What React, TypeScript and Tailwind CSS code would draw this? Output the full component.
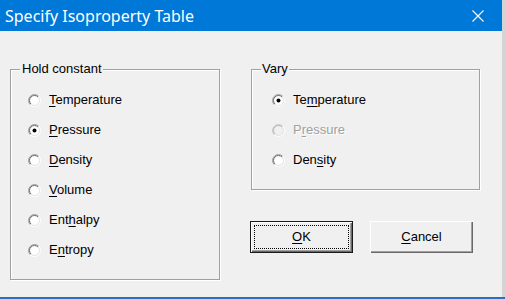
import React from "react";

const FONT = { fontFamily: '"Liberation Sans", Arial, sans-serif' };

function Radio({ checked, disabled }: { checked?: boolean; disabled?: boolean }) {
  return (
    <svg width="13" height="13" viewBox="0 0 13 13" className="shrink-0">
      <circle cx="6.5" cy="6.5" r="5" fill={disabled ? "#f0f0f0" : "#ffffff"} />
      <path d="M2.257 10.743 A6 6 0 0 1 10.743 2.257" stroke={disabled ? "#c8c8c8" : "#a0a0a0"} strokeWidth="1" fill="none" />
      <path d="M10.743 2.257 A6 6 0 0 1 2.257 10.743" stroke="#ffffff" strokeWidth="1" fill="none" />
      <path d="M2.964 10.036 A5 5 0 0 1 10.036 2.964" stroke={disabled ? "#b4b4b4" : "#696969"} strokeWidth="1" fill="none" />
      <path d="M10.036 2.964 A5 5 0 0 1 2.964 10.036" stroke="#e3e3e3" strokeWidth="1" fill="none" />
      {checked && <circle cx="6.5" cy="6.5" r="2" fill="#000" />}
    </svg>
  );
}

function Label({ text, u, disabled }: { text: string; u: number; disabled?: boolean }) {
  return (
    <span
      className={disabled ? "text-[#a0a0a0]" : "text-black"}
      style={disabled ? { textShadow: "1px 1px 0 #ffffff" } : undefined}
    >
      {text.slice(0, u)}
      <span className="underline underline-offset-[2px]">{text[u]}</span>
      {text.slice(u + 1)}
    </span>
  );
}

function Row({ text, u, checked, disabled }: { text: string; u: number; checked?: boolean; disabled?: boolean }) {
  return (
    <div className="flex h-[30px] items-center gap-[8px]">
      <Radio checked={checked} disabled={disabled} />
      <Label text={text} u={u} disabled={disabled} />
    </div>
  );
}

function GroupBox({
  title,
  className,
  labelClass,
  children,
}: {
  title: string;
  className: string;
  labelClass: string;
  children: React.ReactNode;
}) {
  return (
    <div
      className={`relative border border-[#a0a0a0] ${className}`}
      style={{ boxShadow: "inset 1px 1px 0 #ffffff, 1px 1px 0 #ffffff" }}
    >
      <span className={`absolute top-[-9px] bg-[#f0f0f0] leading-[16px] ${labelClass}`}>{title}</span>
      {children}
    </div>
  );
}

export default function App() {
  return (
    <div className="flex h-[299px] w-[505px] flex-col overflow-hidden bg-[#f0f0f0] text-[13px]" style={FONT}>
      <div className="flex flex-1 flex-row">
        <div className="flex w-[502px] flex-col">
          {/* Title bar */}
          <div className="flex h-[31px] items-center justify-between bg-[#0078d7] pl-[5px] pr-[18px]">
            <span
              className="text-[16px] text-white leading-none"
              style={{ fontFamily: '"Noto Sans", "Open Sans", sans-serif' }}
            >
              Specify Isoproperty Table
            </span>
            <svg width="12" height="12" viewBox="0 0 12 12">
              <path d="M0.5 0.5 L11.5 11.5 M11.5 0.5 L0.5 11.5" stroke="#ffffff" strokeWidth="1.1" />
            </svg>
          </div>
          {/* Body */}
          <div className="flex flex-1 flex-row pl-[10px] pt-[38px]">
            <GroupBox title="Hold constant" className="h-[211px] w-[210px] pl-[17px] pt-[15px]" labelClass="left-[9px] pl-[2px] pr-[1px]">
              <Row text="Temperature" u={0} />
              <Row text="Pressure" u={0} checked />
              <Row text="Density" u={0} />
              <Row text="Volume" u={0} />
              <Row text="Enthalpy" u={3} />
              <Row text="Entropy" u={1} />
            </GroupBox>
            <div className="ml-[31px] flex flex-col">
              <GroupBox title="Vary" className="h-[121px] w-[229px] pl-[20px] pt-[15px]" labelClass="left-[9px] pl-[1px] pr-[1px]">
                <Row text="Temperature" u={2} checked />
                <Row text="Pressure" u={1} disabled />
                <Row text="Density" u={3} />
              </GroupBox>
              <div className="ml-[-1px] mt-[31px] flex flex-row gap-[17px]">
                <button className="h-[32px] w-[103px] border border-[#1a1a1a] bg-[#f0f0f0] p-0">
                  <div
                    className="flex h-full w-full p-[3px]"
                    style={{ boxShadow: "inset 1px 1px 0 #ffffff, inset -1px -1px 0 #696969, inset -2px -2px 0 #a0a0a0" }}
                  >
                    <div className="flex flex-1 items-center justify-center border border-dotted border-black">
                      <Label text="OK" u={0} />
                    </div>
                  </div>
                </button>
                <button
                  className="flex h-[32px] w-[103px] items-center justify-center bg-[#f0f0f0]"
                  style={{ boxShadow: "inset 1px 1px 0 #ffffff, inset -1px -1px 0 #696969, inset -2px -2px 0 #a0a0a0" }}
                >
                  <Label text="Cancel" u={0} />
                </button>
              </div>
            </div>
          </div>
        </div>
        <div className="w-[3px] bg-[#d4d4d4]" />
      </div>
      <div className="h-[2px] bg-[#2a6fc4]" />
    </div>
  );
}
